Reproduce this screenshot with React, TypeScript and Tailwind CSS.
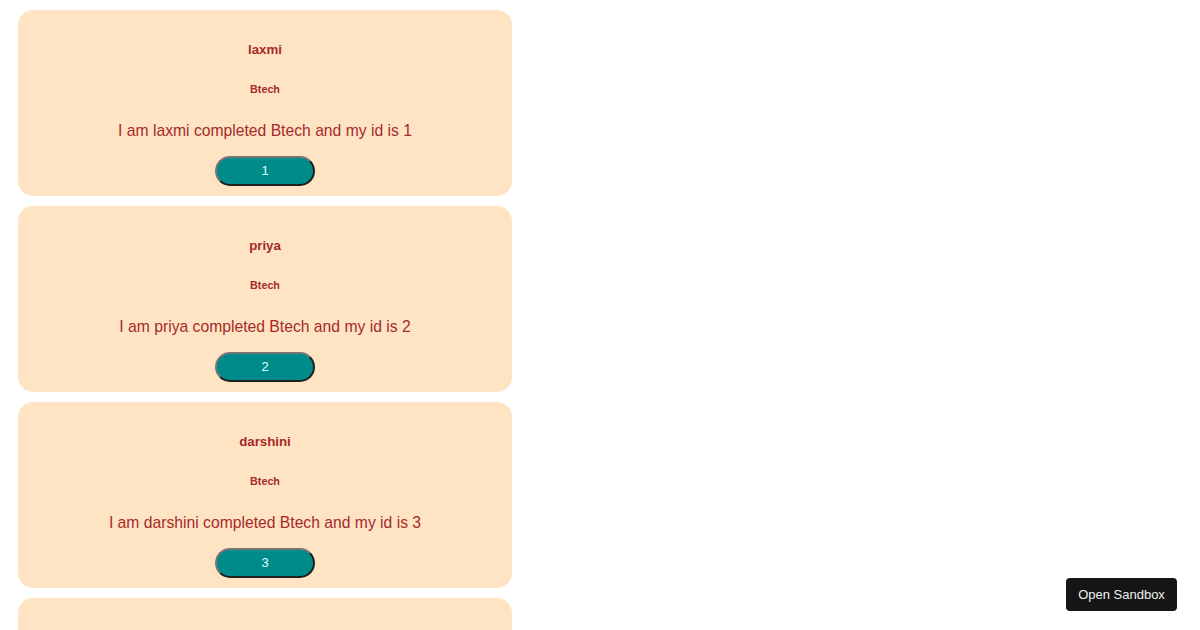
const students = [
  { id: 1, name: 'laxmi', course: 'Btech' },
  { id: 2, name: 'priya', course: 'Btech' },
  { id: 3, name: 'darshini', course: 'Btech' },
  { id: 4, name: 'kavya', course: 'Btech' },
];

function StudentCard({ id, name, course }: { id: number; name: string; course: string }) {
  return (
    <div className="w-[494px] rounded-[15px] bg-[#ffe4c4] px-[10px] pt-[32px] pb-[10px] flex flex-col items-center text-[#a52a2a]">
      <h5 className="text-[13.28px] leading-[15px] font-bold">{name}</h5>
      <h6 className="mt-[26px] text-[10.72px] leading-[12px] font-bold">{course}</h6>
      <p className="mt-[27px] text-[15.7px] leading-[18px]">
        I am {name} completed {course} and my id is {id}
      </p>
      <button className="mt-[16px] w-[100px] h-[30px] rounded-[15px] bg-[#008b8b] border-2 border-solid border-t-[#767676] border-l-[#767676] border-b-[#1f1f1f] border-r-[#1f1f1f] text-[13px] text-[#e0ffff]">
        {id}
      </button>
    </div>
  );
}

export default function App() {
  return (
    <div className="min-h-[630px] bg-white px-[18px] pt-[10px] flex flex-col gap-[10px] font-['Liberation_Sans',Arial,sans-serif]">
      {students.map((s) => (
        <StudentCard key={s.id} {...s} />
      ))}
      <button className="fixed right-[23px] bottom-[19px] w-[111px] h-[33px] rounded-[4px] bg-[#151515] text-[13px] text-[#f0f0f0] font-['Liberation_Sans',Arial,sans-serif]">
        Open Sandbox
      </button>
    </div>
  );
}
